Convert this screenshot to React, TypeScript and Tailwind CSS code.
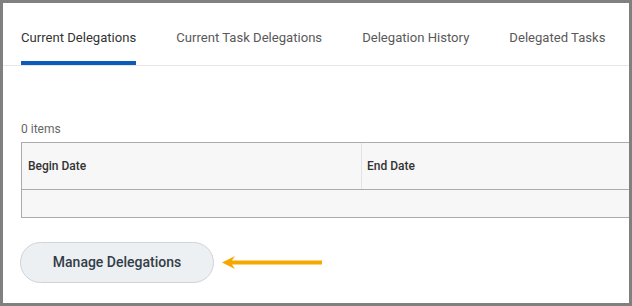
const tabs = [
  "Current Delegations",
  "Current Task Delegations",
  "Delegation History",
  "Delegated Tasks",
];

export default function App() {
  return (
    <div
      className="h-[306px] w-[632px] overflow-hidden border-[3px] border-[#808080] bg-white"
      style={{ fontFamily: "Roboto, 'Liberation Sans', sans-serif" }}
    >
      <div className="flex gap-10 border-b border-[#e6e6e6] px-[18px]">
        {tabs.map((t, i) => (
          <div
            key={t}
            className={
              i === 0
                ? "shrink-0 whitespace-nowrap border-b-4 border-[#0b5cba] pt-[26px] pb-[14px] text-[13.1px] leading-[18px] text-[#333333]"
                : "shrink-0 whitespace-nowrap border-b-4 border-transparent pt-[26px] pb-[14px] text-[13.1px] leading-[18px] text-[#595959]"
            }
          >
            {t}
          </div>
        ))}
      </div>

      <div className="mt-[55px] pl-[18px] text-[12px] leading-4 text-[#666666]">0 items</div>

      <div className="mt-[5px] ml-[18px] border-y border-l border-[#ababab] bg-[#f7f7f7]">
        <div className="flex h-[47px] border-b border-[#ababab] text-[12px] font-medium text-[#333333]">
          <div className="flex w-[340px] items-center border-r border-[#e3e3e3] pl-[6px]">Begin Date</div>
          <div className="flex items-center pl-[5px]">End Date</div>
        </div>
        <div className="h-[27px]" />
      </div>

      <div className="mt-[24px] ml-[17px] flex items-center gap-2">
        <button className="h-[41px] w-[194px] rounded-full border border-[#cfd4d9] bg-[#edf0f2] text-[14px] font-medium text-[#333d47]">
          Manage Delegations
        </button>
        <svg width="100" height="15" viewBox="0 0 100 15">
          <polygon points="0,7.5 13,1 10,5.5 100,5.5 100,9.5 10,9.5 13,14" fill="#f6a800" />
        </svg>
      </div>
    </div>
  );
}
